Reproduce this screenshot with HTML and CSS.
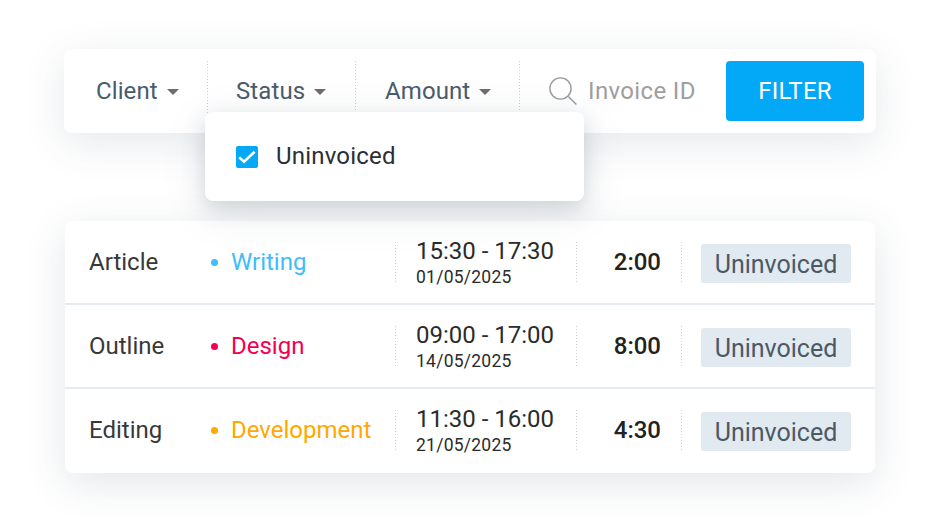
FILE: index.html
```html
<!DOCTYPE html>
<html lang="en">
<head>
<meta charset="utf-8">
<title>Invoices</title>
<link rel="stylesheet" href="styles.css">
</head>
<body>
<main class="page">
  <section class="filterbar">
    <div class="filter f-client"><span>Client</span><i class="caret"></i></div>
    <div class="filter f-status"><span>Status</span><i class="caret"></i></div>
    <div class="filter f-amount"><span>Amount</span><i class="caret"></i></div>
    <div class="search">
      <svg class="search-icon" width="30" height="30" viewBox="0 0 30 30" fill="none" stroke="#9b9b9b" stroke-width="1.4"><circle cx="12.5" cy="12.5" r="10.6"/><path d="M20.4 20.4 28.4 28.4"/></svg>
      <span>Invoice ID</span>
    </div>
    <button class="filter-btn">FILTER</button>
    <div class="dropdown">
      <span class="checkbox"><svg width="22" height="22" viewBox="0 0 22 22" fill="none" stroke="#fff" stroke-width="2.6"><path d="M3.2 11.4 8 15.8 18.6 5.8"/></svg></span>
      <span>Uninvoiced</span>
    </div>
  </section>

  <section class="table">
    <div class="row">
      <div class="c-name">Article</div>
      <div class="c-tag tag-writing"><i class="dot"></i>Writing</div>
      <div class="c-time"><div class="range">15:30 - 17:30</div><div class="date">01/05/2025</div></div>
      <div class="c-dur">2:00</div>
      <div class="c-status"><span class="badge">Uninvoiced</span></div>
    </div>
    <div class="row">
      <div class="c-name">Outline</div>
      <div class="c-tag tag-design"><i class="dot"></i>Design</div>
      <div class="c-time"><div class="range">09:00 - 17:00</div><div class="date">14/05/2025</div></div>
      <div class="c-dur">8:00</div>
      <div class="c-status"><span class="badge">Uninvoiced</span></div>
    </div>
    <div class="row">
      <div class="c-name">Editing</div>
      <div class="c-tag tag-dev"><i class="dot"></i>Development</div>
      <div class="c-time"><div class="range">11:30 - 16:00</div><div class="date">21/05/2025</div></div>
      <div class="c-dur">4:30</div>
      <div class="c-status"><span class="badge">Uninvoiced</span></div>
    </div>
  </section>
</main>
</body>
</html>
```

FILE: styles.css
```css
* { box-sizing: border-box; }
html, body { margin: 0; height: 100%; background: #fff; overflow: hidden; }
body { font-family: Roboto, "Liberation Sans", sans-serif; }
.page { width: 940px; height: 521px; padding: 49px 64px 0; display: flex; flex-direction: column; gap: 88px; }

.filterbar {
  position: relative; width: 812px; height: 84px; background: #fff; border-radius: 8px;
  box-shadow: 0 10px 40px rgba(60, 80, 100, .13);
  display: flex; align-items: stretch; padding: 12px 12px 12px 0;
  flex: none;
}
.filter {
  display: flex; align-items: center; gap: 9px; height: 60px;
  font-size: 24px; letter-spacing: .1px; color: #4a5c6c; background-image: linear-gradient(#c9ced3 50%, transparent 50%);
  background-size: 1px 3px; background-repeat: repeat-y; background-position: right top;
}
.f-client { width: 144px; padding-left: 32px; }
.f-status { width: 148px; padding-left: 28px; }
.f-amount { width: 164px; padding-left: 29px; }
.caret { width: 0; height: 0; border-left: 6.5px solid transparent; border-right: 6.5px solid transparent; border-top: 6.5px solid #6d6d6d; margin-top: 1px; }
.search { flex: 1; display: flex; align-items: center; gap: 10px; padding-left: 28px; font-size: 24px; letter-spacing: .35px; color: #9e9e9e; }
.search-icon { flex: none; }
.filter-btn {
  width: 138px; height: 60px; border: 0; border-radius: 4px; background: #03a9f7; color: #fff;
  font: 400 24px Roboto, sans-serif; letter-spacing: .2px; padding: 0;
}
.dropdown {
  position: absolute; left: 141px; top: 63px; width: 379px; height: 89px; background: #fff; border-radius: 8px;
  box-shadow: 0 8px 22px rgba(50, 70, 90, .2), 0 10px 50px rgba(50, 70, 90, .08);
  display: flex; align-items: center; gap: 18px; padding-left: 31px; padding-bottom: 2px; font-size: 24px; letter-spacing: .2px; color: #2b2f33;
}
.checkbox { width: 22px; height: 22px; border-radius: 2px; background: #03a9f7; display: flex; margin-top: 2px; }

.table {
  width: 810px; height: 252px; margin-left: 1px; background: #fff; border-radius: 8px;
  box-shadow: 0 10px 40px rgba(60, 80, 100, .14); display: flex; flex-direction: column; flex: none;
}
.row { height: 84px; display: flex; align-items: center; border-bottom: 2px solid #e6ebef; }
.row:last-child { border-bottom-color: transparent; }
.c-name { width: 122px; padding-left: 24px; font-size: 24px; color: #383838; }
.c-tag { width: 208px; padding-left: 24px; display: flex; align-items: center; font-size: 24px; }
.dot { width: 7px; height: 7px; border-radius: 50%; background: currentColor; margin-right: 13px; }
.tag-writing { color: #40bdfb; }
.tag-design { color: #f5004f; }
.tag-dev { color: #ffa800; }
.c-time, .c-dur, .c-status { height: 40px; background-image: linear-gradient(#cfd3d8 50%, transparent 50%); background-size: 1px 3px; background-repeat: repeat-y; }
.c-time { width: 181px; padding-left: 21px; color: #2b2b2b; display: flex; flex-direction: column; justify-content: flex-start; }
.range { font-size: 24px; line-height: 26px; margin-top: -4px; }
.date { font-size: 17.5px; line-height: 20px; letter-spacing: .25px; margin-top: 3px; }
.c-dur { width: 105px; padding-right: 20px; display: flex; align-items: center; justify-content: flex-end; font-size: 24px; font-weight: 500; color: #222; }
.c-status { flex: 1; display: flex; align-items: center; padding-left: 20px; }
.badge { width: 150px; height: 39px; margin-top: 2px; background: #e1e9f1; border-radius: 3px; display: flex; align-items: center; justify-content: center; padding-top: 2px; font-size: 25px; color: #4c5864; }
```
